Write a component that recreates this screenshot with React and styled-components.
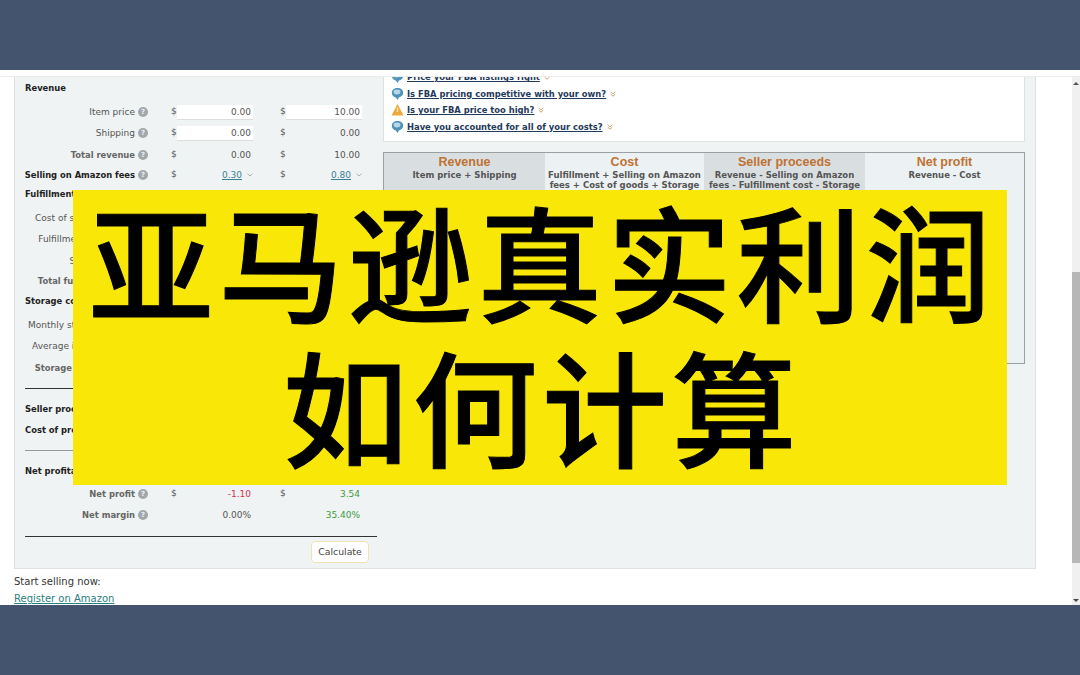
import React from "react";
import styled, { createGlobalStyle } from "styled-components";

const Global = createGlobalStyle`
  html, body { margin: 0; padding: 0; background: #fff; overflow: hidden; }
  * { box-sizing: border-box; }
`;
const Page = styled.div`
  position: relative;
  width: 1080px;
  height: 675px;
  display: flex;
  flex-direction: column;
  font-family: "DejaVu Sans", sans-serif;
  font-size: 9px;
  color: #555;
  overflow: hidden;
`;
const Band = styled.div`
  flex: 0 0 70px;
  background: #44546f;
`;
const Strip = styled.div`
  flex: 0 0 7px;
  background: #fff;
  border-bottom: 1px solid #ececec;
`;
const Viewport = styled.div`
  flex: 1;
  min-height: 0;
  display: flex;
  overflow: hidden;
  background: #fff;
`;
const Main = styled.main`
  flex: 1;
  padding-left: 14px;
`;
const Scrollbar = styled.div`
  flex: 0 0 8px;
  display: flex;
  flex-direction: column;
  align-items: center;
  background: #f0f0f0;
`;
const ArrowUp = styled.i`
  margin-top: 5px;
  border: 3px solid transparent;
  border-top: 0;
  border-bottom: 3px solid #555;
`;
const ArrowDown = styled.i`
  margin-top: auto;
  margin-bottom: 3px;
  border: 3px solid transparent;
  border-bottom: 0;
  border-top: 3px solid #444;
`;
const Thumb = styled.div`
  width: 100%;
  height: 291px;
  margin-top: 187px;
  background: #b7b7b7;
`;
const Panel = styled.section`
  width: 1022px;
  height: 492px;
  display: flex;
  gap: 6px;
  padding-left: 10px;
  background: #f0f3f3;
  border: 1px solid #dfe2e2;
  border-top: 0;
`;
const Calc = styled.div`
  width: 352px;
  display: flex;
  flex-direction: column;
  padding-top: 1px;
`;
const Heading = styled.div`
  flex: none;
  height: 20px;
  margin-bottom: ${(p) => p.$after ?? 3}px;
  display: flex;
  align-items: center;
  font-weight: 700;
  color: #222;
  font-size: 8.4px;
  white-space: nowrap;
`;
const Row = styled.div`
  flex: 0 0 ${(p) => p.$h ?? 21.3}px;
  height: ${(p) => p.$h ?? 21.3}px;
  display: flex;
  align-items: center;
`;
const Label = styled.div`
  width: 123px;
  display: flex;
  align-items: center;
  justify-content: flex-end;
  gap: 3px;
  white-space: nowrap;
  font-weight: ${(p) => (p.$bold ? 700 : 400)};
  font-size: ${(p) => (p.$bold ? 8.4 : 9)}px;
  color: ${(p) => (p.$dark ? "#222" : p.$bold ? "#666" : "#555")};
`;
const Help = styled.span`
  flex: none;
  width: 10px;
  height: 10px;
  border-radius: 50%;
  background: #a3a7a8;
  color: #eef;
  font-size: 7px;
  font-weight: 700;
  line-height: 10px;
  text-align: center;
`;
const Money = styled.div`
  width: 82px;
  margin-left: 23px;
  display: flex;
  align-items: center;
  & + & { margin-left: 27px; }
`;
const Dollar = styled.span`
  flex: 0 0 6px;
  margin-top: -2px;
  font-size: 9px;
`;
const Value = styled.span`
  flex: 1;
  padding-right: 2px;
  text-align: right;
  color: ${(p) => p.$color ?? "#555"};
`;
const Field = styled.input`
  width: 76px;
  height: 15px;
  padding: 0 2px 0 0;
  border: 0;
  border-bottom: 1px solid #ddd;
  background: #fff;
  outline: 0;
  font: inherit;
  color: #555;
  text-align: right;
`;
const FeeLink = styled.a`
  flex: 1;
  display: flex;
  align-items: center;
  justify-content: flex-end;
  gap: 5px;
  color: #3a7f95;
  text-decoration: underline;
`;
const Rule = styled.hr`
  flex: none;
  width: 100%;
  height: 0;
  margin: ${(p) => p.$top ?? 10}px 0 ${(p) => p.$bottom ?? 10}px;
  border: 0;
  border-top: 1px solid ${(p) => p.$c ?? "#333"};
`;
const Actions = styled.div`
  display: flex;
  justify-content: flex-end;
  padding-right: 8px;
`;
const Button = styled.button`
  width: 58px;
  height: 22px;
  padding: 0;
  background: #fff;
  border: 1px solid #efe3b4;
  border-radius: 4px;
  font: inherit;
  font-size: 9.3px;
  color: #444;
`;
const Side = styled.div`
  width: 642px;
  display: flex;
  flex-direction: column;
  gap: 10px;
`;
const TipBox = styled.div`
  height: 65px;
  display: flex;
  flex-direction: column;
  justify-content: flex-end;
  padding: 0 0 6px 7px;
  overflow: hidden;
  background: #fff;
  border: 1px solid #dfe2e2;
  border-top: 0;
`;
const Tip = styled.div`
  flex: 0 0 16.5px;
  display: flex;
  align-items: center;
  gap: 3px;
`;
const TipLink = styled.a`
  color: #1f3a5a;
  font-weight: 700;
  font-size: 8.4px;
  text-decoration: underline;
`;
const Compare = styled.div`
  height: 212px;
  display: grid;
  grid-template-columns: 161px 159px 161px 1fr;
  border: 1px solid #9aa0a2;
`;
const Col = styled.div`
  padding-top: 1px;
  text-align: center;
  background: ${(p) => (p.$shade ? "#d9dfe1" : "#ecf1f3")};
`;
const ColTitle = styled.div`
  font-family: "Liberation Sans", sans-serif;
  font-size: 12.5px;
  line-height: 16px;
  font-weight: 700;
  color: #bf7233;
`;
const ColText = styled.div`
  font-weight: 700;
  font-size: 8.5px;
  line-height: 10px;
  color: #555;
  white-space: nowrap;
`;
const Below = styled.div`
  padding-top: 4px;
  font-size: 10px;
  line-height: 17px;
  color: #333;
`;
const Register = styled.a`
  display: block;
  color: #2a7f7c;
  text-decoration: underline;
`;
const Banner = styled.div`
  position: absolute;
  left: 73px;
  top: 190px;
  width: 934px;
  height: 295px;
  padding-left: 4px;
  background: #f9e807;
`;
const BannerText = styled.div`
  margin-top: -4px;
  display: flex;
  flex-direction: column;
  align-items: center;
  color: #000;
  font-family: "Noto Sans CJK SC", sans-serif;
  font-weight: 500;
  font-size: 125px;
  letter-spacing: 4.5px;
  line-height: 145px;
  white-space: nowrap;
  -webkit-text-stroke: 1px #000;
`;

const Bubble = () => (
  <svg width="13" height="14" viewBox="0 0 13 14">
    <path d="M6.5 1C3.2 1 .8 3 .8 5.8c0 2.5 2 4.3 4 4.7L6.6 13l1.3-2.6c2.4-.5 4.3-2.2 4.3-4.6C12.2 3 9.8 1 6.5 1z" fill="#4f93b8" />
    <ellipse cx="6" cy="5" rx="3.4" ry="2.4" fill="#b4d8ea" />
  </svg>
);
const Warn = () => (
  <svg width="13" height="14" viewBox="0 0 13 14">
    <path d="M6.5 1 .5 12.5h12z" fill="#eda93c" />
    <path d="M6.5 4.5v4.5" stroke="#fbe6b8" strokeWidth="1.4" />
  </svg>
);
const Chev = () => (
  <svg width="6" height="6" viewBox="0 0 6 6" style={{ marginLeft: 1 }}>
    <path d="M.7 .8 3 2.8 5.3 .8M.7 3.2 3 5.2l2.3-2" fill="none" stroke="#c7a878" strokeWidth="1" />
  </svg>
);
const Caret = () => (
  <svg width="6" height="4" viewBox="0 0 6 4">
    <path d="M.5 .7 3 3l2.5-2.3" fill="none" stroke="#a9b0b3" strokeWidth="1" />
  </svg>
);

const Amount = ({ kind, text, color, noDollar }) => (
  <Money>
    <Dollar>{noDollar ? "" : "$"}</Dollar>
    {kind === "input" && <Field readOnly value={text} />}
    {kind === "link" && <FeeLink>{text}<Caret /></FeeLink>}
    {!kind && <Value $color={color}>{text}</Value>}
  </Money>
);

const Item = ({ label, bold, dark, a = "0.00", b = "0.00", kindA, kindB, aColor, bColor, noDollar, h }) => (
  <Row $h={h}>
    <Label $bold={bold} $dark={dark}>{label}<Help>?</Help></Label>
    <Amount kind={kindA} text={a} color={aColor} noDollar={noDollar} />
    <Amount kind={kindB} text={b} color={bColor} noDollar={noDollar} />
  </Row>
);

export default function App() {
  return (
    <Page>
      <Global />
      <Band />
      <Strip />
      <Viewport>
        <Main>
          <Panel>
            <Calc>
              <Heading $after={3.5}>Revenue</Heading>
              <Item label="Item price" kindA="input" kindB="input" b="10.00" />
              <Item label="Shipping" kindA="input" />
              <Item label="Total revenue" bold b="10.00" />
              <Item label="Selling on Amazon fees" bold dark kindA="link" a="0.30" kindB="link" b="0.80" h={19} />
              <Heading>Fulfillment cost</Heading>
              <Item label="Cost of seller shipping" />
              <Item label="Fulfillment shipments" />
              <Item label="Shipping costs" />
              <Item label="Total fulfillment cost" bold h={20} />
              <Heading>Storage cost</Heading>
              <Item label="Monthly storage charge" />
              <Item label="Average inventory unit" />
              <Item label="Storage cost per unit" bold />
              <Rule />
              <Heading $after={1}>Seller proceeds</Heading>
              <Heading $after={0}>Cost of product</Heading>
              <Rule $c="#999" />
              <Heading $after={2}>Net profitability</Heading>
              <Item label="Net profit" bold a="-1.10" b="3.54" aColor="#d0334f" bColor="#3f9a3f" />
              <Item label="Net margin" bold noDollar a="0.00%" b="35.40%" bColor="#3f9a3f" />
              <Rule $bottom={4} />
              <Actions><Button>Calculate</Button></Actions>
            </Calc>
            <Side>
              <TipBox>
                <Tip><Bubble /><TipLink>Price your FBA listings right</TipLink><Chev /></Tip>
                <Tip><Bubble /><TipLink>Is FBA pricing competitive with your own?</TipLink><Chev /></Tip>
                <Tip><Warn /><TipLink>Is your FBA price too high?</TipLink><Chev /></Tip>
                <Tip><Bubble /><TipLink>Have you accounted for all of your costs?</TipLink><Chev /></Tip>
              </TipBox>
              <Compare>
                <Col $shade><ColTitle>Revenue</ColTitle><ColText>Item price + Shipping</ColText></Col>
                <Col><ColTitle>Cost</ColTitle><ColText>Fulfillment + Selling on Amazon</ColText><ColText>fees + Cost of goods + Storage</ColText></Col>
                <Col $shade><ColTitle>Seller proceeds</ColTitle><ColText>Revenue - Selling on Amazon</ColText><ColText>fees - Fulfillment cost - Storage</ColText></Col>
                <Col><ColTitle>Net profit</ColTitle><ColText>Revenue - Cost</ColText></Col>
              </Compare>
            </Side>
          </Panel>
          <Below>
            Start selling now:
            <Register>Register on Amazon</Register>
          </Below>
        </Main>
        <Scrollbar>
          <ArrowUp />
          <Thumb />
          <ArrowDown />
        </Scrollbar>
      </Viewport>
      <Band />
      <Banner>
        <BannerText>
          <div>亚马逊真实利润</div>
          <div>如何计算</div>
        </BannerText>
      </Banner>
    </Page>
  );
}
